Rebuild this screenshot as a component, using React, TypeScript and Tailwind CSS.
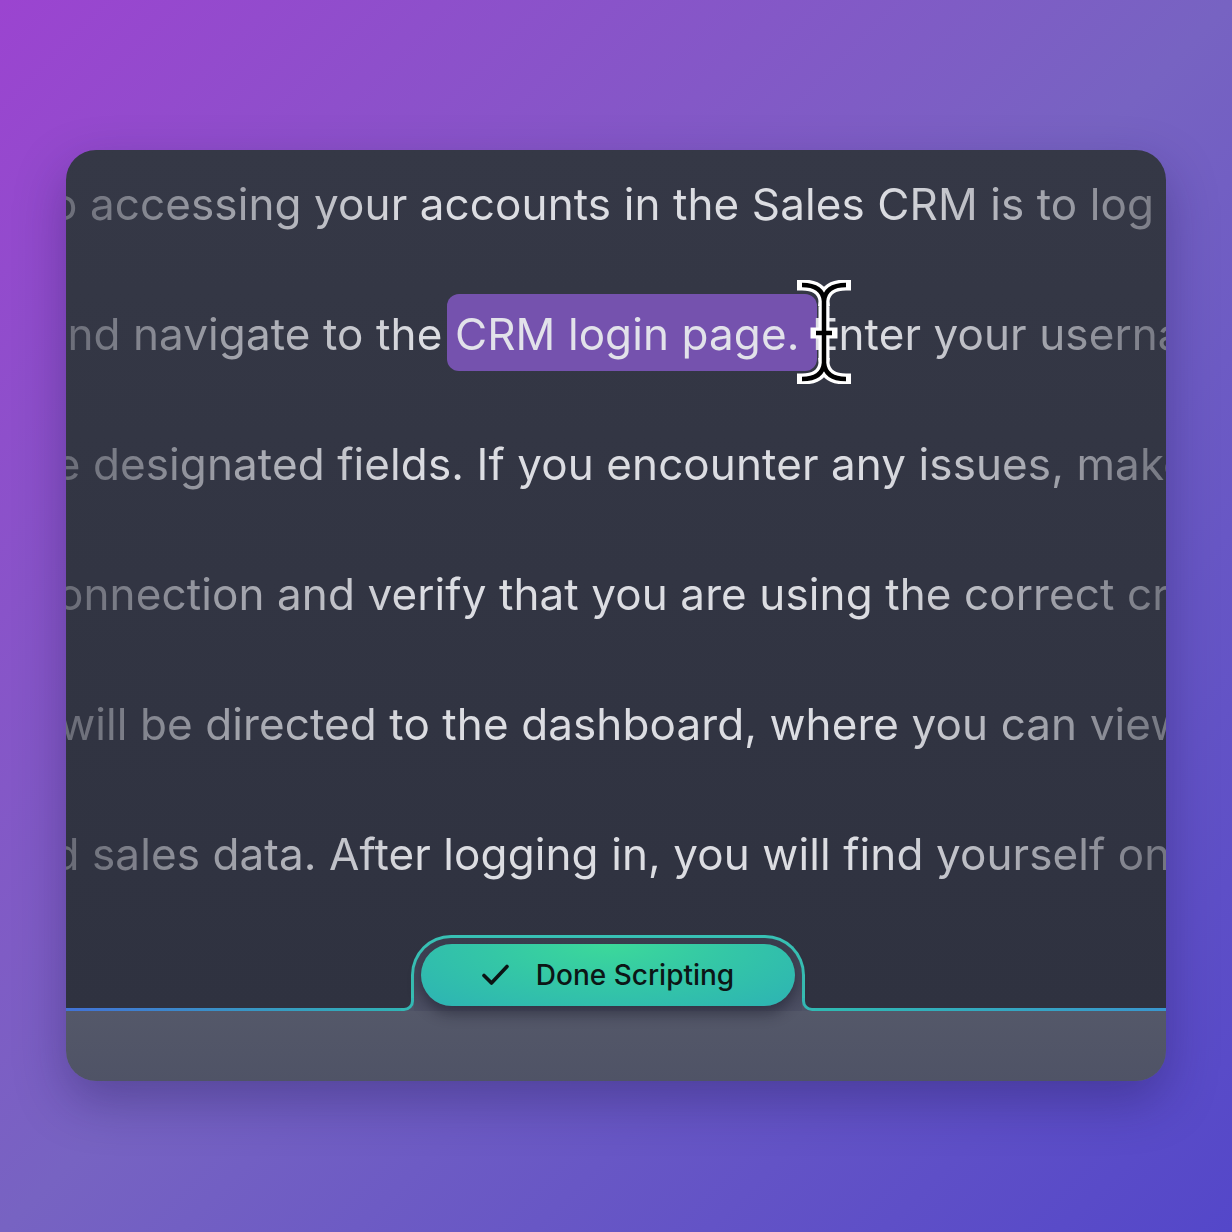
import React from "react";

const lines: { pad: string; pre: string; main: React.ReactNode }[] = [
  {
    pad: "w-[24px]",
    pre: "The first step to ",
    main: "accessing your accounts in the Sales CRM is to log in and navigate",
  },
  {
    pad: "w-[67px]",
    pre: "log in and ",
    main: (
      <>
        navigate to the{" "}
        <span className="rounded-[12px] bg-[#7552ae] pt-[13px] pb-[10px] pl-[8px] -ml-[8px] pr-[18px] -mr-[18px] text-[#e2e2ea]">
          CRM login page.
        </span>{" "}
        Enter your username and password
      </>
    ),
  },
  {
    pad: "w-[27px]",
    pre: "password in the ",
    main: "designated fields. If you encounter any issues, make sure to check",
  },
  {
    pad: "w-[211px]",
    pre: "check your internet connection ",
    main: "and verify that you are using the correct credentials.",
  },
  {
    pad: "w-[74px]",
    pre: "Once logged in, you will ",
    main: "be directed to the dashboard, where you can view your accounts",
  },
  {
    pad: "w-[26px]",
    pre: "contacts, and ",
    main: "sales data. After logging in, you will find yourself on the main page.",
  },
];

function Cursor() {
  const d =
    "M5 5 C17 5 26 9 27 21 M49 5 C37 5 28 9 27 21 M27 21 L27 83 M5 99 C17 99 26 95 27 83 M49 99 C37 99 28 95 27 83 M19 53 L35 53";
  return (
    <svg width="54" height="104" viewBox="0 0 54 104" fill="none">
      <path d={d} stroke="#ffffff" strokeWidth="11" strokeLinecap="square" strokeLinejoin="round" />
      <path d={d} stroke="#000000" strokeWidth="4.5" strokeLinecap="butt" strokeLinejoin="round" />
    </svg>
  );
}

export default function App() {
  return (
    <div className="w-[1232px] h-[1232px] bg-[linear-gradient(135deg,#9b44d0_0%,#7763c2_50%,#5447c9_100%)] pt-[150px] pl-[66px]">
      <div className="relative w-[1100px] h-[931px] rounded-[30px] overflow-hidden flex flex-col shadow-[0_20px_50px_rgba(30,20,80,0.35)]">
        {/* dark script area */}
        <div className="h-[858px] bg-[linear-gradient(180deg,#353846,#2f3240)] overflow-hidden pt-[1px]">
          <div
            className="flex flex-col gap-[24px] text-[44px] tracking-[0.1px] text-[#dcdde2] [mask-image:linear-gradient(90deg,rgba(0,0,0,0.33)_0%,#000_32%,#000_74%,rgba(0,0,0,0.4)_100%)]"
            style={{ fontFamily: "Inter, 'Noto Sans', sans-serif" }}
          >
            {lines.map((l, i) => (
              <div key={i} className="flex h-[106px] leading-[106px] whitespace-pre">
                <div className={`${l.pad} shrink-0 flex justify-end`}>
                  <span>{l.pre}</span>
                </div>
                <span>{l.main}</span>
              </div>
            ))}
          </div>
        </div>
        {/* separator line */}
        <div className="h-[3px] bg-[linear-gradient(90deg,#4272d6_0%,#2fb9b3_33%,#2fb9b3_70%,#3a96cf_100%)]" />
        {/* grey footer */}
        <div className="flex-1 bg-[linear-gradient(180deg,#545869,#4f5366)]" />

        {/* tab with button */}
        <div className="absolute left-[345px] top-[785px] w-[394px] h-[76px] rounded-t-[40px] border-[3px] border-b-0 border-[#38c1b5] bg-[linear-gradient(180deg,#3a3d4e,#4d5064)] flex justify-center pt-[6px]">
          <div
            className="w-[374px] h-[62px] rounded-full bg-[radial-gradient(ellipse_at_50%_0%,#3cd99a_0%,#34c7a6_45%,#2db3b4_100%)] flex items-center justify-center gap-[27px] shadow-[0_8px_14px_rgba(20,20,35,0.45)]"
            style={{ fontFamily: "Inter, 'Noto Sans', sans-serif" }}
          >
            <svg width="27" height="22" viewBox="0 0 27 22" fill="none">
              <path d="M2 11.5 L9.5 19 L25 2.5" stroke="#0b1414" strokeWidth="3.6" strokeLinecap="round" strokeLinejoin="round" />
            </svg>
            <span className="text-[28px] font-medium text-[#0c1616] leading-none">Done Scripting</span>
          </div>
        </div>
        {/* outer fillets */}
        <div className="absolute left-[335px] top-[848px] w-[13px] h-[13px] bg-[#4f5366]">
          <div className="w-full h-full bg-[#2f3240] border-r-[3px] border-b-[3px] border-[#33b8b4] rounded-br-[10px]" />
        </div>
        <div className="absolute left-[736px] top-[848px] w-[13px] h-[13px] bg-[#4f5366]">
          <div className="w-full h-full bg-[#2f3240] border-l-[3px] border-b-[3px] border-[#33b8b4] rounded-bl-[10px]" />
        </div>

        {/* text cursor */}
        <div className="absolute left-[731px] top-[130px]">
          <Cursor />
        </div>
      </div>
    </div>
  );
}
